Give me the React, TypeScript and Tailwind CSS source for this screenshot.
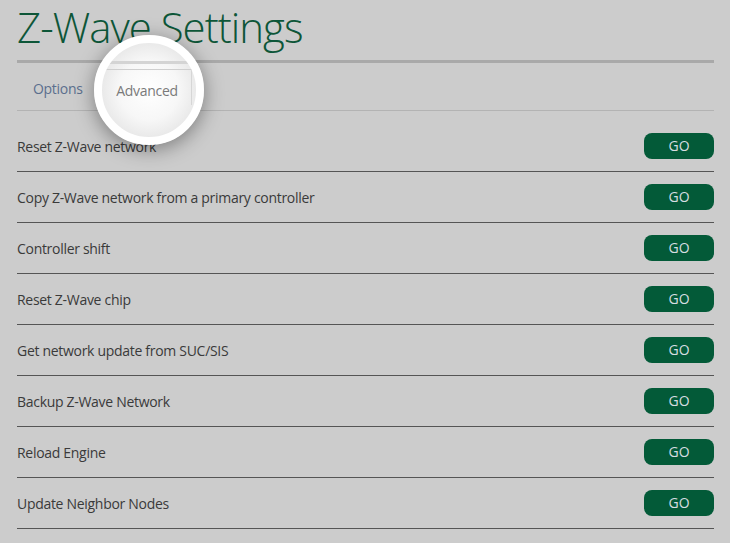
import React from 'react';

const actions = [
  'Reset Z-Wave network',
  'Copy Z-Wave network from a primary controller',
  'Controller shift',
  'Reset Z-Wave chip',
  'Get network update from SUC/SIS',
  'Backup Z-Wave Network',
  'Reload Engine',
  'Update Neighbor Nodes',
];

function Magnifier() {
  return (
    <div className="absolute left-[94px] top-[35px] h-[110px] w-[110px] rounded-full border-[8px] border-white shadow-[0_4px_20px_rgba(0,0,0,0.4)] overflow-hidden bg-[radial-gradient(circle_at_50%_50%,#ffffff_0%,#f7f7f7_45%,#dadada_100%)]">
      {/* magnified tab edges */}
      <div className="absolute left-0 right-0 top-[18px] h-[3px] bg-[#d4d4d4]" />
      <div className="absolute left-0 right-0 top-[26px] h-px bg-[#cfcfcf]" />
      <div className="absolute left-[89px] top-[26px] h-[36px] w-px bg-[#d6d6d6]" />
      <div className="absolute inset-0 flex items-center justify-center">
        <span className="-ml-[4px] text-[14px] tracking-[-0.3px] text-[#7a7a7a]">Advanced</span>
      </div>
    </div>
  );
}

export default function App() {
  return (
    <div className="relative min-h-screen w-full bg-[#cccccc] pl-[17px] pr-[16px] font-['Open_Sans',sans-serif]">
      <h1 className="pt-[6px] pb-[12px] text-[42px] font-light leading-[42px] tracking-[-1px] text-[#0d5638] border-b-[3px] border-[#a9a9a9]">
        Z-Wave Settings
      </h1>

      <div className="flex h-[48px] items-center border-b border-[#b3b3b3] pt-[4px] text-[14px] tracking-[-0.3px]">
        <span className="pl-[16px] text-[#5b6f8e]">Options</span>
        <span className="invisible pl-[35px] text-[#7a7a7a]">Advanced</span>
      </div>

      <div className="mt-[10px]">
        {actions.map((label) => (
          <div
            key={label}
            className="flex h-[51px] items-center justify-between border-b border-[#555555] text-[14px] text-[#3a3a3a]"
          >
            <span className="tracking-[-0.3px]">{label}</span>
            <button className="mt-[-1px] h-[26px] w-[70px] rounded-[8px] bg-[#035a38] text-[14px] text-[#d6dde0]">
              GO
            </button>
          </div>
        ))}
      </div>

      <Magnifier />
    </div>
  );
}
